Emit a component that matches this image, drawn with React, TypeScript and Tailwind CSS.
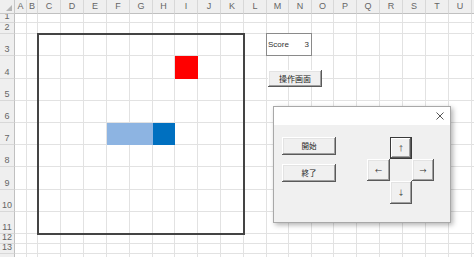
import React from 'react';

const COLS = ['A', 'B', 'C', 'D', 'E', 'F', 'G', 'H', 'I', 'J', 'K', 'L', 'M', 'N', 'O', 'P', 'Q', 'R', 'S', 'T', 'U', ''];
const ROWS = ['1', '2', '3', '4', '5', '6', '7', '8', '9', '10', '11', '12', '13', ''];

// same template for the sheet and the overlay layer
const gridTemplate =
  'grid grid-cols-[15px_12px_11px_23px_23px_23px_23px_23px_22px_23px_23px_23px_23px_22px_23px_22px_23px_23px_23px_23px_23px_23px_10px] grid-rows-[14px_9px_11px_22px_23px_22px_22px_22px_22px_23px_22px_22px_10px_10px_10px]';

const btn3d =
  'flex items-center justify-center bg-[#f0f0f0] shadow-[inset_-1px_-1px_#5a5a5a,inset_1px_1px_#ffffff,inset_-2px_-2px_#a0a0a0,inset_2px_2px_#e3e3e3]';

function Sheet() {
  return (
    <div className={gridTemplate}>
      {/* corner */}
      <div className="relative bg-[#efefef] border-r border-b border-[#c8c8c8]">
        <svg className="absolute right-[2px] bottom-[2px]" width="6" height="6" viewBox="0 0 6 6">
          <polygon points="6,0 6,6 0,6" fill="#b5b5b5" />
        </svg>
      </div>
      {COLS.map((c, i) => (
        <div
          key={'h' + i}
          className="flex items-center justify-center bg-[#efefef] border-r border-[#d8d8d8] border-b border-b-[#c0c0c0] text-[9px] leading-none text-[#666]"
        >
          {c}
        </div>
      ))}
      {ROWS.map((r, ri) => (
        <React.Fragment key={'r' + ri}>
          <div className="flex items-end justify-center pb-[1px] bg-[#efefef] border-r border-r-[#c0c0c0] border-b border-[#d8d8d8] text-[9px] leading-none text-[#666]">
            {r}
          </div>
          {COLS.map((_, ci) => (
            <div key={ci} className="border-r border-b border-[#e2e2e2]" />
          ))}
        </React.Fragment>
      ))}
    </div>
  );
}

function Overlay() {
  return (
    <div className={'absolute inset-0 pointer-events-none ' + gridTemplate}>
      {/* board C3:K11 */}
      <div className="col-start-4 col-span-9 row-start-4 row-span-9 -m-px border-2 border-[#444]" />
      {/* food */}
      <div className="col-start-10 row-start-5 bg-[#ff0000]" />
      {/* snake */}
      <div className="col-start-7 col-span-2 row-start-8 bg-[#8db4e2]" />
      <div className="col-start-9 row-start-8 bg-[#0070c0]" />
      {/* score */}
      <div className="col-start-14 col-span-2 row-start-4 -ml-px -mt-px flex items-center justify-between pl-[1px] pr-[2px] border border-[#8a8a8a] bg-white text-[8px] text-[#333]">
        <span>Score</span>
        <span>3</span>
      </div>
    </div>
  );
}

function ControlPanel() {
  return (
    <div className="absolute left-[273px] top-[106px] w-[178px] h-[117px] flex flex-col border border-[#a8a8a8] bg-[#f0f0f0] shadow-[2px_2px_5px_rgba(0,0,0,0.3)]">
      <div className="h-[18px] flex items-center justify-end pr-[6px] bg-white">
        <svg width="8" height="8" viewBox="0 0 8 8">
          <path d="M0.5 0.5 L7.5 7.5 M7.5 0.5 L0.5 7.5" stroke="#555" strokeWidth="1" />
        </svg>
      </div>
      <div className="flex flex-1 pt-[12px] pl-[8px] font-['Noto_Sans_CJK_JP',sans-serif] text-[7.5px] text-[#222]">
        <div className="flex flex-col gap-[9px]">
          <div className={btn3d + ' w-[54px] h-[18px]'}>開始</div>
          <div className={btn3d + ' w-[54px] h-[18px]'}>終了</div>
        </div>
        <div className="ml-[31px] grid grid-cols-[23px_22px_22px] grid-rows-[22px_22px_23px] text-[7px] text-[#333]">
          <div />
          <div className="flex items-center justify-center bg-[#f0f0f0] border border-[#3a3a3a] shadow-[inset_-1px_-1px_#5a5a5a,inset_1px_1px_#ffffff,inset_-2px_-2px_#a0a0a0]">↑</div>
          <div />
          <div className={btn3d}>←</div>
          <div />
          <div className={btn3d}>→</div>
          <div />
          <div className={btn3d}>↓</div>
          <div />
        </div>
      </div>
    </div>
  );
}

export default function App() {
  return (
    <div className="relative w-[474px] h-[257px] overflow-hidden bg-white font-['Liberation_Sans',sans-serif]">
      <Sheet />
      <Overlay />
      <div className={btn3d + " absolute left-[268px] top-[70px] w-[54px] h-[17px] font-['Noto_Sans_CJK_JP',sans-serif] text-[8px] text-[#222]"}>
        操作画面
      </div>
      <ControlPanel />
    </div>
  );
}
